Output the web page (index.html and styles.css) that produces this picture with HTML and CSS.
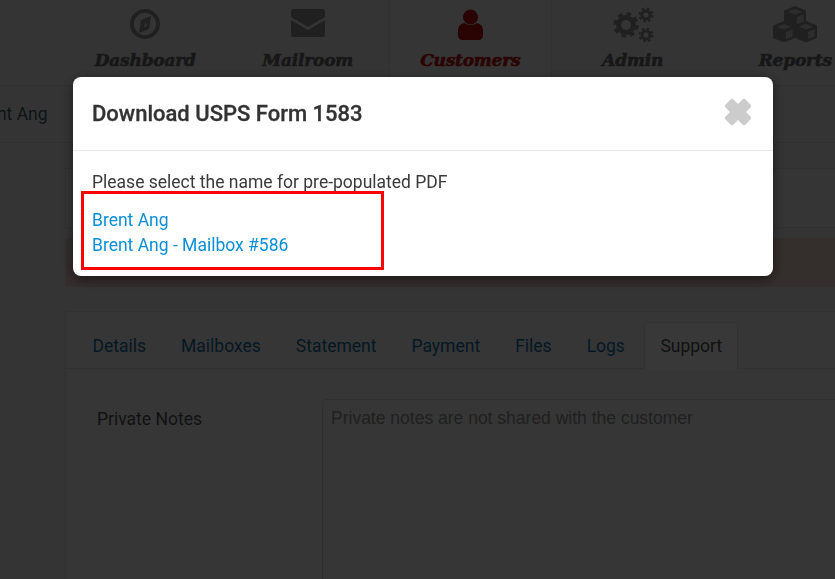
FILE: index.html
```html
<!DOCTYPE html>
<html lang="en">
<head>
    <meta charset="UTF-8">
    <meta name="viewport" content="width=device-width, initial-scale=1.0">
    <title>Customers</title>
    <link rel="stylesheet" href="styles.css">
</head>
<body>

<!-- top menu -->
<nav class="main-nav">
    <a class="nav-item">
        <svg class="nav-icon" viewBox="0 0 44 36">
            <circle cx="22" cy="18" r="13" fill="none" stroke="currentColor" stroke-width="4"/>
            <path d="M28 10 L26 23 L16 27 L18 14 Z M22.500 16 L21 21 L24 19.500 Z" fill="currentColor" fill-rule="evenodd"/>
        </svg>
        <span>Dashboard</span>
    </a>
    <a class="nav-item">
        <svg class="nav-icon" viewBox="0 0 44 36">
            <path d="M7 3 H37 Q39 3 39 5 V11 L22 21 L5 11 V5 Q5 3 7 3 Z" fill="currentColor"/>
            <path d="M5 14 L22 24 L39 14 V29 Q39 31 37 31 H7 Q5 31 5 29 Z" fill="currentColor"/>
        </svg>
        <span>Mailroom</span>
    </a>
    <a class="nav-item active">
        <svg class="nav-icon" viewBox="0 0 44 36">
            <circle cx="22.500" cy="11" r="7.500" fill="currentColor"/>
            <path d="M16 17 Q22.500 21 29 17 Q35 18 35 25 V29 Q35 34 30 34 H15 Q10 34 10 29 V25 Q10 18 16 17 Z" fill="currentColor"/>
        </svg>
        <span>Customers</span>
    </a>
    <a class="nav-item">
        <svg class="nav-icon" viewBox="0 0 44 36">
            <g class="gear">
                <circle cx="15" cy="19" r="7.500" stroke-width="5"/>
                <circle cx="15" cy="19" r="11" stroke-width="3.500" stroke-dasharray="4.640 4"/>
            </g>
            <g class="gear">
                <circle cx="35" cy="9" r="4" stroke-width="3"/>
                <circle cx="35" cy="9" r="6.300" stroke-width="2.500" stroke-dasharray="2.500 2.450"/>
            </g>
            <g class="gear">
                <circle cx="35" cy="29" r="4" stroke-width="3"/>
                <circle cx="35" cy="29" r="6.300" stroke-width="2.500" stroke-dasharray="2.500 2.450"/>
            </g>
        </svg>
        <span>Admin</span>
    </a>
    <a class="nav-item">
        <svg class="nav-icon" viewBox="0 0 44 36">
            <g>
                <path d="M22 0 L33 4.500 V17 L22 21.500 L11 17 V4.500 Z" fill="currentColor"/>
                <path class="cube-face" d="M22 3 L29 5.800 L22 8.600 L15 5.800 Z M24 11 L30.500 8.500 V15.500 L24 18 Z"/>
            </g>
            <g>
                <path d="M11 15 L22 19.500 V32 L11 36.500 L0 32 V19.500 Z" fill="currentColor"/>
                <path class="cube-face" d="M11 18 L18 20.800 L11 23.600 L4 20.800 Z M13 26 L19.500 23.500 V30.500 L13 33 Z"/>
            </g>
            <g>
                <path d="M33 15 L44 19.500 V32 L33 36.500 L22 32 V19.500 Z" fill="currentColor"/>
                <path class="cube-face" d="M33 18 L40 20.800 L33 23.600 L26 20.800 Z M35 26 L41.500 23.500 V30.500 L35 33 Z"/>
            </g>
        </svg>
        <span>Reports</span>
    </a>
</nav>

<div class="crumb-row">
    <span class="crumb-name">Brent Ang</span>
</div>

<main class="content">
    <div class="info-box"></div>
    <div class="alert-box"></div>

    <section class="panel">
        <ul class="tabs">
            <li><a>Details</a></li>
            <li><a>Mailboxes</a></li>
            <li><a>Statement</a></li>
            <li><a>Payment</a></li>
            <li><a>Files</a></li>
            <li><a>Logs</a></li>
            <li class="current"><a>Support</a></li>
        </ul>
        <div class="tab-body">
            <label class="field-label" for="notes">Private Notes</label>
            <textarea id="notes" class="notes" placeholder="Private notes are not shared with the customer"></textarea>
        </div>
    </section>
</main>

<!-- modal -->
<div class="backdrop">
    <div class="modal">
        <div class="modal-header">
            <h3>Download USPS Form 1583</h3>
            <svg class="modal-close" viewBox="0 0 28 28">
                <path d="M9.500 1.500 L14 6 L18.500 1.500 Q20 0 21.500 1.500 L26.500 6.500 Q28 8 26.500 9.500 L22 14 L26.500 18.500 Q28 20 26.500 21.500 L21.500 26.500 Q20 28 18.500 26.500 L14 22 L9.500 26.500 Q8 28 6.500 26.500 L1.500 21.500 Q0 20 1.500 18.500 L6 14 L1.500 9.500 Q0 8 1.500 6.500 L6.500 1.500 Q8 0 9.500 1.500 Z" fill="currentColor"/>
            </svg>
        </div>
        <div class="modal-body">
            <p>Please select the name for pre-populated PDF</p>
            <a href="#">Brent Ang</a>
            <a href="#">Brent Ang - Mailbox #586</a>
            <div class="highlight"></div>
        </div>
    </div>
</div>

</body>
</html>
```

FILE: styles.css
```css
* {
    box-sizing: border-box;
}
html, body {
    height: 100%;
}
body {
    margin: 0;
    overflow: hidden;
    background-color: #cfcfcf;
    font-family: Roboto, Arial, sans-serif;
    font-size: 17.500px;
    color: #4a4a4a;
}
.main-nav {
    display: flex;
    width: 900px;
    height: 85px;
    padding-left: 64px;
}
.nav-item {
    flex: 0 0 162.500px;
    display: flex;
    flex-direction: column;
    align-items: center;
    padding-top: 6px;
    color: #808080;
}
.nav-item span {
    margin-top: 8px;
    font-family: "DejaVu Serif", serif;
    font-size: 17px;
    font-weight: bold;
    font-style: italic;
    letter-spacing: -0.200px;
    line-height: 21px;
    color: #5c5c5c;
    -webkit-text-stroke: 0.600px currentColor;
}
.nav-icon {
    width: 44px;
    height: 36px;
}
.nav-item.active {
    color: #a80c0c;
    border-left: 1px solid #c4c4c4;
    border-right: 1px solid #c4c4c4;
    background-color: #d4d4d4;
}
.nav-item.active span {
    color: #a80c0c;
}
.cube-face {
    fill: #b4b4b4;
}
.gear circle {
    fill: none;
    stroke: currentColor;
}
.crumb-row {
    height: 58px;
    border-top: 1px solid #c0c0c0;
    border-bottom: 1px solid #c0c0c0;
    display: flex;
    align-items: center;
}
.crumb-name {
    margin-left: -29px;
    color: #3a4f5e;
    white-space: nowrap;
}
.content {
    padding: 25px 0 0 65px;
}
.info-box {
    height: 60px;
    border: 1px solid #c0c0c0;
    border-right: 0;
    background-color: #d2d2d2;
}
.alert-box {
    height: 49px;
    margin-top: 10px;
    border-radius: 4px 0 0 4px;
    background-color: #cdb6ae;
}
.panel {
    margin-top: 24px;
    height: 400px;
    border: 1px solid #c4c4c4;
    border-right: 0;
    background-color: #d6d6d6;
}
.tabs {
    display: flex;
    list-style: none;
    margin: 0;
    height: 57px;
    padding: 10px 0 0 9px;
    border-bottom: 1px solid #c4c4c4;
}
.tabs a {
    display: block;
    padding: 14px 17.500px 0;
    height: 46px;
    color: #126290;
    white-space: nowrap;
}
.tabs .current {
    margin-left: 2px;
    margin-bottom: -1px;
    border: 1px solid #c4c4c4;
    border-bottom: 0;
    border-radius: 4px 4px 0 0;
    background-color: #e0e0e0;
}
.tabs .current a {
    padding-top: 13px;
    padding-left: 15px;
    padding-right: 15px;
    color: #4a4a4a;
}
.tab-body {
    display: flex;
    align-items: flex-start;
    padding: 30px 0 0 31px;
}
.field-label {
    width: 225px;
    padding-top: 10px;
    flex: none;
}
.notes {
    flex: none;
    width: 600px;
    height: 250px;
    padding: 8px;
    border: 1px solid #bdbdbd;
    border-radius: 4px;
    background-color: #d6d6d6;
    font-family: "Liberation Sans", Arial, sans-serif;
    font-size: 17.500px;
    resize: none;
}
.notes::placeholder {
    color: #808080;
}
.backdrop {
    position: fixed;
    top: 0;
    left: 0;
    right: 0;
    bottom: 0;
    padding: 77px 0 0 73px;
    background-color: rgba(0, 0, 0, 0.75);
}
.modal {
    width: 700px;
    height: 199px;
    border-radius: 8px;
    background-color: #fff;
    box-shadow: 0 3px 12px rgba(0, 0, 0, 0.5);
    color: #3a3a3a;
}
.modal-header {
    display: flex;
    align-items: center;
    justify-content: space-between;
    height: 74px;
    padding: 0 21px 0 19px;
    border-bottom: 1px solid #e9e9e9;
}
.modal-header h3 {
    margin: 0;
    font-size: 22px;
    font-weight: 500;
    color: #333;
    -webkit-text-stroke: 0.300px currentColor;
}
.modal-close {
    width: 28px;
    height: 28px;
    margin-top: -4px;
    color: #ccc;
}
.modal-body {
    position: relative;
    padding: 19px 19px;
    line-height: 25px;
}
.modal-body p {
    margin: 0 0 13px;
}
.modal-body a {
    display: block;
    color: #0a8fd6;
    text-decoration: none;
}
.highlight {
    position: absolute;
    left: 8px;
    top: 40px;
    width: 303px;
    height: 79px;
    border: 3px solid #f00;
}
```
